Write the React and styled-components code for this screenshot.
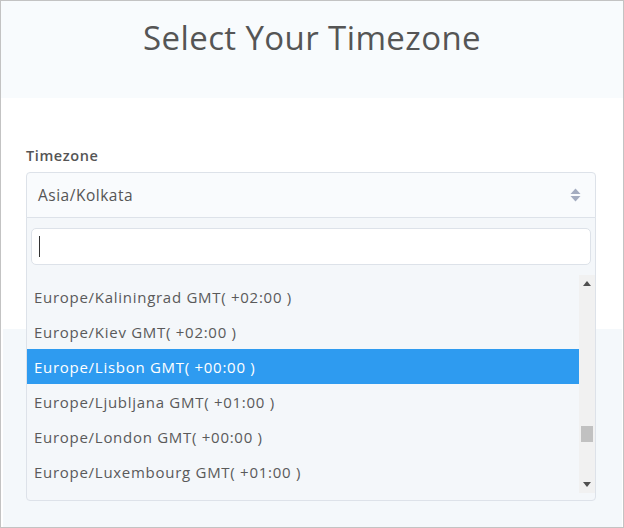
import styled, { createGlobalStyle } from 'styled-components';

const GlobalStyle = createGlobalStyle`
  html, body {
    margin : 0;
    padding : 0;
    background : #ffffff;
  }
  body {
    font-family : "Open Sans", "Noto Sans", "Liberation Sans", sans-serif;
    color : #555555;
  }
  * {
    box-sizing : border-box;
  }
`;

const zones = [
  { name : 'Europe/Kaliningrad', offset : '+02:00' },
  { name : 'Europe/Kiev', offset : '+02:00' },
  { name : 'Europe/Lisbon', offset : '+00:00' },
  { name : 'Europe/Ljubljana', offset : '+01:00' },
  { name : 'Europe/London', offset : '+00:00' },
  { name : 'Europe/Luxembourg', offset : '+01:00' },
];

const Frame = styled.div`
      width : 624px;
      height : 528px;
      border : 1px solid #c3c3c3;
      background : #ffffff;
      display : flex;
      flex-direction : column;
      overflow : hidden;
`;

const Header = styled.div`
      height : 97px;
      background : #f8fbfd;
      display : flex;
      justify-content : center;
      padding-top : 17px;
`;

const Title = styled.h1`
      margin : 0;
      font-size : 33px;
      font-weight : 400;
      letter-spacing : 0.4px;
      line-height : 40px;
      color : #555555;
`;

const Body = styled.div`
      height : 231px;
      padding : 48px 27px 0 25px;
`;

const Label = styled.div`
      font-size : 14.5px;
      font-weight : 600;
      letter-spacing : 0.6px;
      line-height : 20px;
      color : #555555;
      margin-bottom : 6px;
`;

const Field = styled.div`
      position : relative;
`;

const SelectBox = styled.div`
      height : 46px;
      border : 1px solid #dde2e9;
      border-radius : 4px 4px 0 0;
      background : #f9fbfd;
      display : flex;
      align-items : center;
      justify-content : space-between;
      padding : 0 14px 0 11px;
      font-size : 15.5px;
      letter-spacing : 0.5px;
      color : #555555;
`;

const Dropdown = styled.div`
      position : absolute;
      top : 45px;
      left : 0;
      right : 0;
      height : 284px;
      border : 1px solid #dde2e9;
      border-radius : 0 0 4px 4px;
      background : #f4f7fa;
      display : flex;
      flex-direction : column;
      padding : 10px 0 7px 0;
      z-index : 2;
`;

const SearchWrap = styled.div`
      padding : 0 4px;
      margin-bottom : 10px;
`;

const Search = styled.div`
      height : 37px;
      border : 1px solid #dde2e9;
      border-radius : 5px;
      background : #ffffff;
      display : flex;
      align-items : center;
      padding-left : 7px;
`;

const Caret = styled.span`
      width : 1px;
      height : 21px;
      background : #333333;
`;

const ListArea = styled.div`
      flex : 1;
      display : flex;
      overflow : hidden;
`;

const Options = styled.ul`
      flex : 1;
      list-style : none;
      margin : 0;
      padding : 4px 0 0 0;
`;

const Option = styled.li`
      height : 35px;
      display : flex;
      align-items : center;
      padding-left : 7px;
      font-size : 15px;
      letter-spacing : 0.72px;
      color : ${(props) => props.$active ? '#ffffff' : '#5a5a5a'};
      background : ${(props) => props.$active ? '#2e9bf0' : 'transparent'};
`;

const Scrollbar = styled.div`
      width : 16px;
      background : #f1f1f1;
      display : flex;
      flex-direction : column;
      align-items : center;
`;

const ScrollArrow = styled.div`
      height : 17px;
      width : 16px;
      display : flex;
      align-items : center;
      justify-content : center;
`;

const Track = styled.div`
      flex : 1;
      width : 100%;
      display : flex;
      flex-direction : column;
      align-items : center;
      padding-bottom : 34px;
      justify-content : flex-end;
`;

const Thumb = styled.div`
      width : 12px;
      height : 16px;
      background : #c1c1c1;
`;

const Footer = styled.div`
      flex : 1;
      margin : 0 1px 0 2px;
      background : #f4f8fb;
`;

const SortArrows = () => (
  <svg width="11" height="14" viewBox="0 0 11 14">
    <path d="M5.5 0.5 L10.5 6 L0.5 6 Z" fill="#a4acc0" />
    <path d="M5.5 13.5 L10.5 8 L0.5 8 Z" fill="#a4acc0" />
  </svg>
);

const Triangle = ({ down }) => (
  <svg width="8" height="5" viewBox="0 0 8 5">
    <path d={down ? 'M0 0 L8 0 L4 5 Z' : 'M4 0 L8 5 L0 5 Z'} fill="#505050" />
  </svg>
);

const App = () => {
  return (
    <>
      <GlobalStyle />
      <Frame>
        <Header>
          <Title>Select Your Timezone</Title>
        </Header>
        <Body>
          <Label>Timezone</Label>
          <Field>
            <SelectBox>
              <span>Asia/Kolkata</span>
              <SortArrows />
            </SelectBox>
            <Dropdown>
              <SearchWrap>
                <Search>
                  <Caret />
                </Search>
              </SearchWrap>
              <ListArea>
                <Options>
                  {zones.map((zone) => (
                    <Option key={zone.name} $active={zone.name === 'Europe/Lisbon'}>
                      {zone.name} GMT( {zone.offset} )
                    </Option>
                  ))}
                </Options>
                <Scrollbar>
                  <ScrollArrow><Triangle /></ScrollArrow>
                  <Track>
                    <Thumb />
                  </Track>
                  <ScrollArrow><Triangle down /></ScrollArrow>
                </Scrollbar>
              </ListArea>
            </Dropdown>
          </Field>
        </Body>
        <Footer />
      </Frame>
    </>
  );
};

export default App;
